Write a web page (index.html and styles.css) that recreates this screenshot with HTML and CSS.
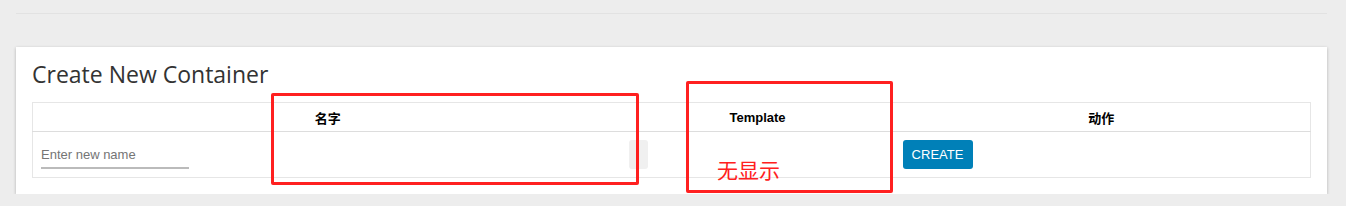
FILE: index.html
```html
<!DOCTYPE html>
<html>
<head>
<meta charset="utf-8">
<link rel="stylesheet" href="styles.css">
</head>
<body>
<div class="page">
  <div class="topline"></div>
  <div class="card">
    <h2 class="title">Create New Container</h2>
    <table class="grid">
      <colgroup>
        <col class="c1"><col class="c2"><col class="c3">
      </colgroup>
      <thead>
        <tr><th>名字</th><th>Template</th><th>动作</th></tr>
      </thead>
      <tbody>
        <tr>
          <td><input class="name" type="text" placeholder="Enter new name"></td>
          <td><span class="sel"></span></td>
          <td><button class="btn">CREATE</button></td>
        </tr>
      </tbody>
    </table>
    <div class="mark mark1"></div>
    <div class="mark mark2"><span class="note">无显示</span></div>
  </div>
</div>
</body>
</html>
```
FILE: styles.css
```css
html, body { margin: 0; padding: 0; }
body { background: #ededed; font-family: "Liberation Sans", Arial, sans-serif; }
.page { padding: 0 19px 0 16px; }
.topline { height: 13px; border-bottom: 1px solid #e2e2e2; }
.card {
  position: relative;
  margin-top: 33px;
  background: #fff;
  padding: 11px 16px 16px 16px;
  box-shadow: 0 1px 3px rgba(0,0,0,0.25);
}
.title {
  margin: 0 0 12px 0;
  font-family: "Open Sans", sans-serif;
  font-weight: 400;
  font-size: 23px;
  line-height: 32px;
  color: #333;
}
.grid {
  width: 100%;
  border-collapse: collapse;
  border: 1px solid #e6e6e6;
  table-layout: fixed;
}
.c1 { width: 590px; }
.c2 { width: 270px; }
.grid th {
  height: 28px;
  padding: 0 8px;
  font-size: 13px;
  font-weight: bold;
  color: #000;
  text-align: center;
  border-bottom: 1px solid #ddd;
  font-family: "Liberation Sans", "Noto Sans CJK SC", sans-serif;
}
.grid td { height: 45px; padding: 0 8px; vertical-align: middle; }
.name {
  display: block;
  width: 148px;
  box-sizing: border-box;
  border: none;
  border-bottom: 2px solid #bbb;
  padding: 4px 0 5px 0;
  font-family: "Liberation Sans", Arial, sans-serif;
  font-size: 13px;
  outline: none;
  margin-top: 3px;
}
.name::placeholder { color: #757575; }
.sel {
  display: block;
  width: 19px;
  height: 29px;
  margin-left: -2px;
  background: #f0f0f0;
  border-radius: 3px;
}
.btn {
  display: block;
  height: 29px;
  width: 70px;
  padding: 0;
  border: none;
  border-radius: 3px;
  background: #0080b8;
  color: #fff;
  font-family: "Liberation Sans", Arial, sans-serif;
  font-size: 13px;
  margin-left: 2px;
}
.mark {
  position: absolute;
  border: 3px solid #ff2020;
  border-radius: 2px;
  box-sizing: border-box;
}
.mark1 { left: 255px; top: 46px; width: 368px; height: 92px; }
.mark2 { left: 670px; top: 34px; width: 207px; height: 112px; }
.note {
  position: absolute;
  left: 28px;
  top: 73px;
  color: #ff2020;
  font-family: "Noto Sans CJK SC", sans-serif;
  font-size: 21px;
  line-height: 24px;
}
```
